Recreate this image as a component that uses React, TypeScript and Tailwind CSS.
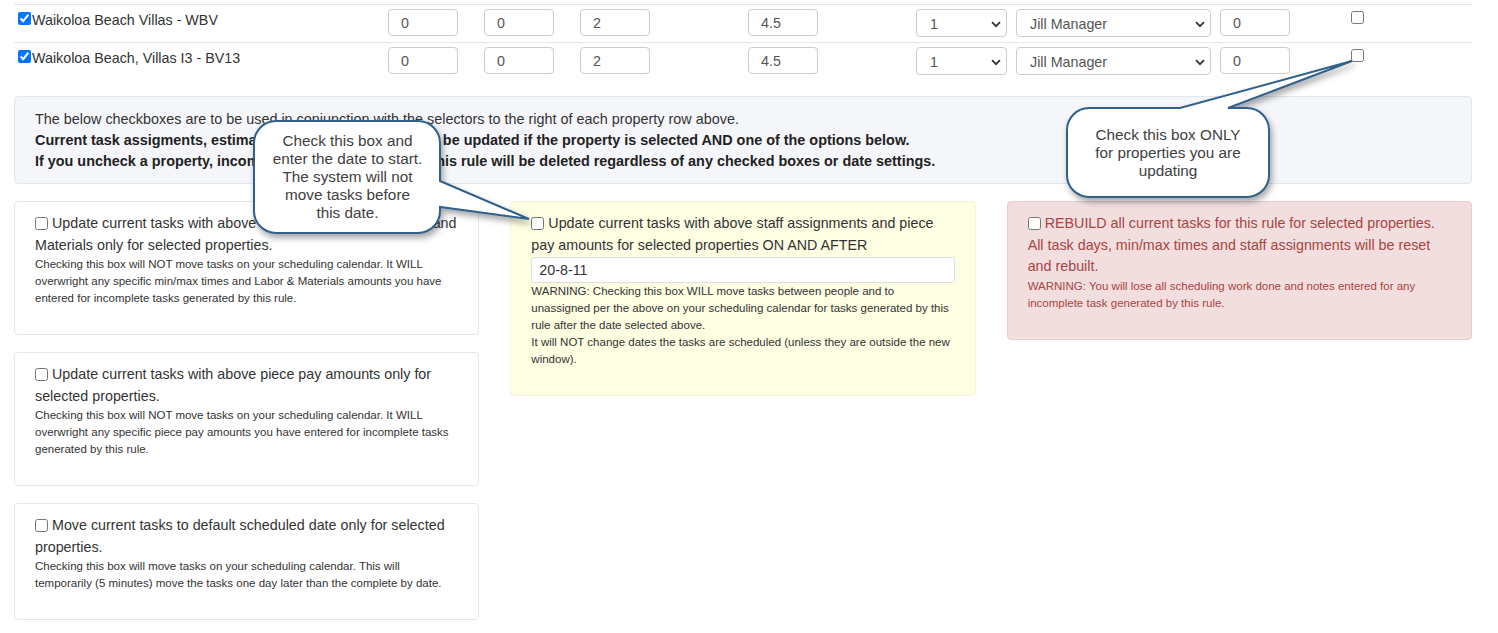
import React from "react";

function TextInput({ value }: { value: string }) {
  return (
    <input
      readOnly
      value={value}
      className="block w-[70px] h-[27px] border border-[#cccccc] rounded-[4px] pl-[12px] text-[14.3px] text-[#555] bg-white outline-none"
    />
  );
}

function Select({ value, width }: { value: string; width: string }) {
  return (
    <div className={`relative h-[28px] ${width}`}>
      <select
        defaultValue={value}
        className="block w-full h-[28px] appearance-none border border-[#cccccc] rounded-[4px] pl-[13px] pt-[3px] text-[14.3px] text-[#555] bg-white outline-none"
      >
        <option value={value}>{value}</option>
      </select>
      <svg
        className="absolute right-[6px] top-[12px] pointer-events-none"
        width="10"
        height="7"
        viewBox="0 0 10 7"
      >
        <path d="M1 1.2 L5 5.2 L9 1.2" fill="none" stroke="#333" strokeWidth="1.8" />
      </svg>
    </div>
  );
}

function PropertyRow({ name }: { name: string }) {
  return (
    <div className="flex h-[38px] border-t border-[#e6e6e6] pt-[4px]">
      <div className="w-[374px] pt-[1px] leading-[21px] text-[14.3px] text-[#333]">
        <label className="whitespace-nowrap">
          <input type="checkbox" defaultChecked className="m-0 ml-[4px] mr-[1px] align-baseline" />
          {name}
        </label>
      </div>
      <div className="w-[96px]">
        <TextInput value="0" />
      </div>
      <div className="w-[96px]">
        <TextInput value="0" />
      </div>
      <div className="w-[168px]">
        <TextInput value="2" />
      </div>
      <div className="w-[168px]">
        <TextInput value="4.5" />
      </div>
      <div className="w-[100px]">
        <Select value="1" width="w-[91px]" />
      </div>
      <div className="w-[204px]">
        <Select value="Jill Manager" width="w-[195px]" />
      </div>
      <div className="w-[131px]">
        <TextInput value="0" />
      </div>
      <div className="pt-[2px]">
        <input type="checkbox" className="block m-0" />
      </div>
    </div>
  );
}

function Card({
  tone,
  label,
  small,
  extra,
}: {
  tone: "plain" | "yellow" | "red";
  label: string[];
  small: string[];
  extra?: React.ReactNode;
}) {
  const toneCls =
    tone === "plain"
      ? "bg-white border-[#e3e6ea] text-[#333]"
      : tone === "yellow"
      ? "bg-[#fefee3] border-[#f6f4d8] text-[#333]"
      : "bg-[#f2dede] border-[#ebccd1] text-[#a94442]";
  return (
    <div className={`border rounded-[4px] px-[20px] pt-[11px] pb-[27px] ${toneCls}`}>
      <div className="text-[14.3px] leading-[21.5px]">
        {label.map((l, i) => (
          <div key={i} className="whitespace-nowrap">
            {i === 0 && <input type="checkbox" className="m-0 mr-[4px] align-[-2px]" />}
            {l}
          </div>
        ))}
      </div>
      {extra}
      <div className="text-[11.5px] leading-[17px]">
        {small.map((l, i) => (
          <div key={i} className="whitespace-nowrap">
            {l}
          </div>
        ))}
      </div>
    </div>
  );
}

export default function App() {
  return (
    <div className="relative w-[1498px] h-[633px] overflow-hidden bg-white font-['Liberation_Sans',Arial,sans-serif] text-[#333]">
      <div className="ml-[14px] w-[1458px] pt-[4px]">
        <PropertyRow name="Waikoloa Beach Villas - WBV" />
        <PropertyRow name="Waikoloa Beach, Villas I3 - BV13" />

        <div className="mt-[16px] border border-[#e3e6ed] rounded-[4px] bg-[#f5f6fa] px-[20px] pt-[12px] pb-[11px] text-[14.4px] leading-[21px] text-[#333]">
          <div>
            The below checkboxes are to be used in conjunction with the selectors to the right of each property row above.
          </div>
          <div className="font-bold text-[#222]">
            Current task assigments, estimated times and pay will only be updated if the property is selected AND one of the options below.
          </div>
          <div className="font-bold text-[#222]">
            If you uncheck a property, incomplete tasks generated by this rule will be deleted regardless of any checked boxes or date settings.
          </div>
        </div>

        <div className="mt-[17px] grid grid-cols-3 gap-x-[31px] items-start">
          <div className="flex flex-col gap-[17px]">
            <Card
              tone="plain"
              label={[
                "Update current tasks with above estimated times and Labor and",
                "Materials only for selected properties.",
              ]}
              small={[
                "Checking this box will NOT move tasks on your scheduling calendar. It WILL",
                "overwright any specific min/max times and Labor & Materials amounts you have",
                "entered for incomplete tasks generated by this rule.",
              ]}
            />
            <Card
              tone="plain"
              label={[
                "Update current tasks with above piece pay amounts only for",
                "selected properties.",
              ]}
              small={[
                "Checking this box will NOT move tasks on your scheduling calendar. It WILL",
                "overwright any specific piece pay amounts you have entered for incomplete tasks",
                "generated by this rule.",
              ]}
            />
            <Card
              tone="plain"
              label={[
                "Move current tasks to default scheduled date only for selected",
                "properties.",
              ]}
              small={[
                "Checking this box will move tasks on your scheduling calendar. This will",
                "temporarily (5 minutes) move the tasks one day later than the complete by date.",
              ]}
            />
          </div>
          <Card
            tone="yellow"
            label={[
              "Update current tasks with above staff assignments and piece",
              "pay amounts for selected properties ON AND AFTER",
            ]}
            extra={
              <input
                readOnly
                value="20-8-11"
                className="block w-full h-[26px] mt-[1px] border border-[#dddddd] rounded-[3px] pl-[7px] text-[14.3px] text-[#333] bg-white outline-none"
              />
            }
            small={[
              "WARNING: Checking this box WILL move tasks between people and to",
              "unassigned per the above on your scheduling calendar for tasks generated by this",
              "rule after the date selected above.",
              "It will NOT change dates the tasks are scheduled (unless they are outside the new",
              "window).",
            ]}
          />
          <Card
            tone="red"
            label={[
              "REBUILD all current tasks for this rule for selected properties.",
              "All task days, min/max times and staff assignments will be reset",
              "and rebuilt.",
            ]}
            small={[
              "WARNING: You will lose all scheduling work done and notes entered for any",
              "incomplete task generated by this rule.",
            ]}
          />
        </div>
      </div>

      {/* Callout overlays */}
      <svg
        className="absolute left-0 top-0 pointer-events-none"
        width="1498"
        height="633"
        viewBox="0 0 1498 633"
      >
        <defs>
          <filter id="callout-shadow" x="-20%" y="-30%" width="140%" height="170%">
            <feDropShadow dx="2" dy="4" stdDeviation="3" floodColor="#000" floodOpacity="0.35" />
          </filter>
        </defs>
        <path
          d="M276 121 H418 A22 22 0 0 1 440 143 V181 L529 219 L440 207 V211 A22 22 0 0 1 418 233 H276 A22 22 0 0 1 254 211 V143 A22 22 0 0 1 276 121 Z"
          fill="#ffffff"
          stroke="#30608b"
          strokeWidth="2"
          strokeLinejoin="miter"
          filter="url(#callout-shadow)"
        />
        <path
          d="M1089 108 H1180 L1352 61 L1228 108 H1247 A22 22 0 0 1 1269 130 V175 A22 22 0 0 1 1247 197 H1089 A22 22 0 0 1 1067 175 V130 A22 22 0 0 1 1089 108 Z"
          fill="#ffffff"
          stroke="#30608b"
          strokeWidth="2"
          strokeLinejoin="miter"
          filter="url(#callout-shadow)"
        />
      </svg>
      <div className="absolute left-[255px] top-[132px] w-[185px] text-center text-[15.3px] leading-[18px] text-[#404040]">
        <div>Check this box and</div>
        <div>enter the date to start.</div>
        <div>The system will not</div>
        <div>move tasks before</div>
        <div>this date.</div>
      </div>
      <div className="absolute left-[1067px] top-[126px] w-[202px] text-center text-[15.3px] leading-[18px] text-[#404040]">
        <div>Check this box ONLY</div>
        <div>for properties you are</div>
        <div>updating</div>
      </div>
    </div>
  );
}
